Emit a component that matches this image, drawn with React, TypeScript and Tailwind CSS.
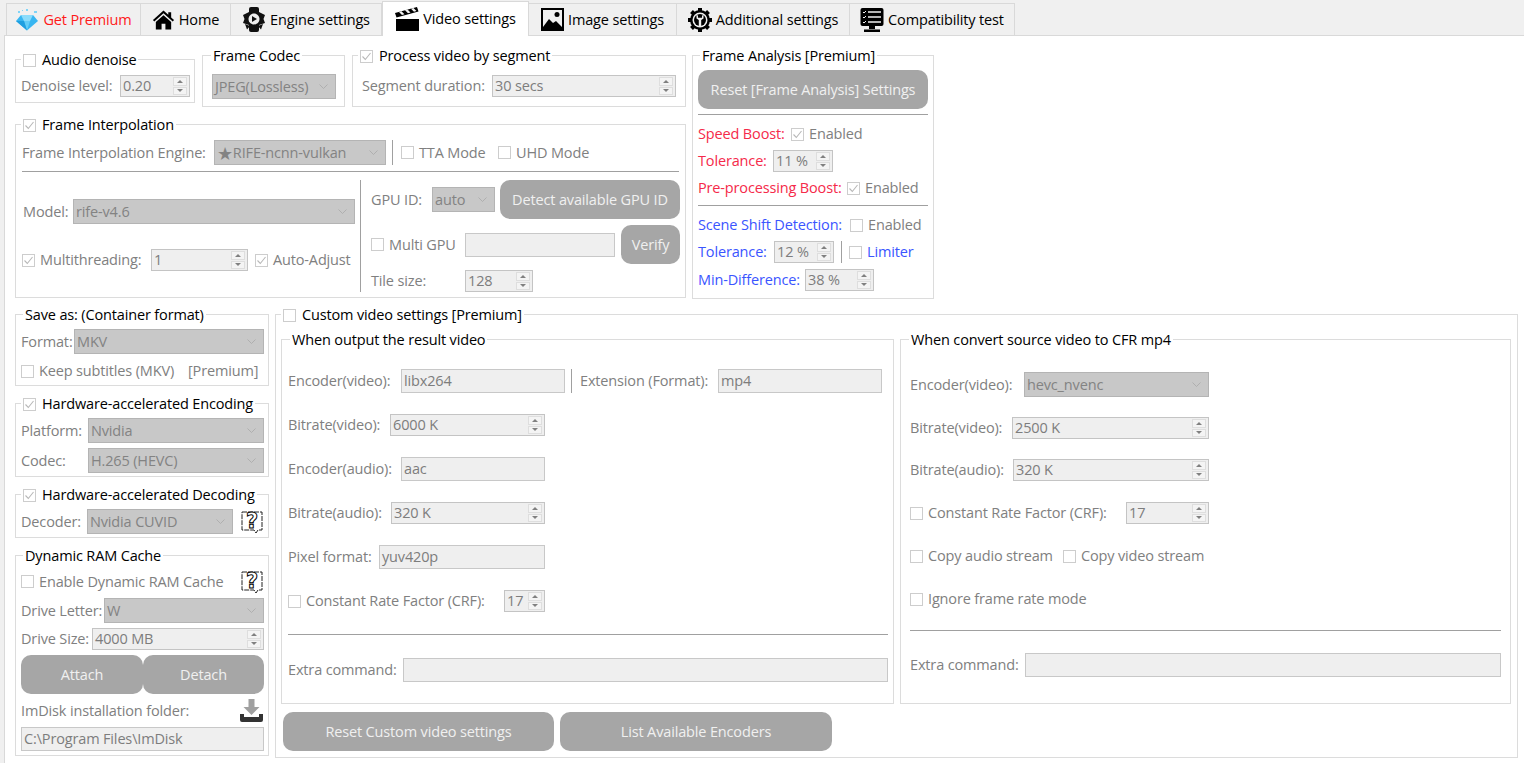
import React from 'react'
import clsx from 'clsx'

// tiny win32-ish widgets

const Chevron = () => (
    <svg width="9" height="5" viewBox="0 0 9 5" className="shrink-0">
        <path d="M0.500 0.500l4 4 4-4" fill="none" stroke="#acacac" strokeWidth="0.9" />
    </svg>
)

const Combo = ({ text, className }: { text: React.ReactNode; className: string }) => (
    <div className={clsx("flex h-[25px] shrink-0 items-center justify-between border border-[#b4b4b4] bg-[#c8c8c8] pl-[2px] pr-[7px] text-[#838383]", className)}>
        <span className="flex items-center whitespace-nowrap">{text}</span>
        <Chevron />
    </div>
)

const Spin = ({ text, className }: { text: string; className: string }) => (
    <div className={clsx("flex h-[22px] shrink-0 items-center justify-between border border-[#c4c4c4] bg-[#efefef] pl-[2px] pr-[2px] text-[#7d7d7d]", className)}>
        <span className="whitespace-nowrap">{text}</span>
        <div className="flex h-[18px] w-[14px] flex-col gap-[1px]">
            <div className="flex flex-1 items-center justify-center border border-[#dedede] bg-[#f4f4f4]">
                <svg width="6" height="3" viewBox="0 0 6 3"><path d="M3 0l3 3H0z" fill="#808080" /></svg>
            </div>
            <div className="flex flex-1 items-center justify-center border border-[#dedede] bg-[#f4f4f4]">
                <svg width="6" height="3" viewBox="0 0 6 3"><path d="M0 0h6L3 3z" fill="#808080" /></svg>
            </div>
        </div>
    </div>
)

const Input = ({ text, className }: { text?: string; className: string }) => (
    <div className={clsx("flex h-[24px] shrink-0 items-center border border-[#c8c8c8] bg-[#efefef] pl-[2px] text-[#7d7d7d]", className)}>
        <span className="whitespace-nowrap">{text}</span>
    </div>
)

const Box = ({ checked }: { checked?: boolean }) => (
    <span className="flex h-[13px] w-[13px] shrink-0 items-center justify-center border border-[#cdcdcd] bg-white">
        {checked && (
            <svg width="11" height="11" viewBox="0 0 11 11">
                <path d="M1.500 5.500l2.800 3L9.500 2" fill="none" stroke="#b8b8b8" strokeWidth="1.100" />
            </svg>
        )}
    </span>
)

const Check = ({ label, checked, className, labelClass }: { label?: string; checked?: boolean; className?: string; labelClass?: string }) => (
    <div className={clsx("flex shrink-0 items-center gap-[5px] whitespace-nowrap", className)}>
        <Box checked={checked} />
        {label && <span className={labelClass ?? "text-[#808080]"}>{label}</span>}
    </div>
)

const Label = ({ text, className }: { text: string; className: string }) => (
    <span className={clsx("shrink-0 whitespace-nowrap text-[#808080]", className)}>{text}</span>
)

const Btn = ({ text, className }: { text: string; className: string }) => (
    <div className={clsx("flex h-[39px] shrink-0 items-center justify-center whitespace-nowrap rounded-[10px] bg-[#a6a6a6] text-[#f0f0f0]", className)}>{text}</div>
)

const Group = ({ title, check, checked, className, inner, children }: { title: string; check?: boolean; checked?: boolean; className: string; inner?: string; children?: React.ReactNode }) => (
    <div className={clsx("shrink-0 border border-[#dcdcdc] bg-white", className)}>
        <div className={clsx("-mt-[10px] flex h-[20px] w-fit items-center gap-[6px] whitespace-nowrap bg-white px-[2px] text-black", inner ?? (check ? "ml-[5px]" : "ml-[7px]"))}>
            {check && <Box checked={checked} />}
            <span>{title}</span>
        </div>
        {children}
    </div>
)

// tab + misc icons

const Diamond = () => (
    <svg width="24" height="23" viewBox="0 0 24 23">
        <g fill="#7fd4f7"><rect x="3" y="3" width="2" height="2" /><rect x="11" y="1" width="2" height="2" /><rect x="19" y="3" width="3" height="2" /><rect x="7" y="2" width="1" height="1" /></g>
        <path d="M6 7h12l5 6-11 9.500L1 13z" fill="#38b6f1" />
        <path d="M6 7h12l-3 6H9z" fill="#8adcfb" />
        <path d="M9 13h6l-3 9.500z" fill="#63cdf7" />
        <path d="M1 13h8l3 9.500z" fill="#1f9fe0" />
    </svg>
)

const HomeIcon = () => (
    <svg width="23" height="22" viewBox="0 0 24 22">
        <path d="M12 1L1 11l1.400 1.500L12 4l9.600 8.500L23 11l-3-2.700V3h-3v2.600z" fill="#000" />
        <path d="M12 6l-8 7v8h6v-6h4v6h6v-8z" fill="#000" />
    </svg>
)

const EngineIcon = () => (
    <svg width="24" height="25" viewBox="0 0 24 25">
        <rect x="7" y="0" width="10" height="25" rx="2" fill="#111" />
        <path d="M1 8l6-3v13l-6-2 1.500-4zM23 8l-6-3v13l6-2-1.500-4z" fill="#111" />
        <path d="M3 17l5 2-3 3.500zM21 17l-5 2 3 3.500z" fill="#111" />
        <path d="M12 6.500c3 0 5.500 2.500 5.500 5.500 0 3-2.500 5.500-5.500 5.500s-5.500-2.500-5.500-5.500c0-3 2.500-5.500 5.500-5.500z" fill="#eee" />
        <path d="M10 9l5 3-5 3z" fill="#111" />
    </svg>
)

const Clapper = () => (
    <svg width="24" height="24" viewBox="0 0 24 24">
        <path d="M1 12h23v12H1z" fill="#000" />
        <path d="M0 6l22-6 1.500 4.500L1.500 10.500z" fill="#000" />
        <path d="M4 5l3 3 2.500-.7-3-3zM10 3.300l3 3 2.500-.7-3-3zM16 1.700l3 3 2.500-.7-3-3z" fill="#f0f0f0" />
    </svg>
)

const ImageIcon = () => (
    <svg width="23" height="23" viewBox="0 0 23 23">
        <rect x="0" y="0" width="23" height="23" fill="#000" />
        <rect x="2" y="2" width="19" height="19" fill="#f0f0f0" />
        <circle cx="16" cy="6.500" r="2.500" fill="#000" />
        <path d="M2 19l6-8 4 4 3-2 6 6v2H2z" fill="#000" />
    </svg>
)

const GearIcon = () => (
    <svg width="24" height="24" viewBox="0 0 24 24">
        <g stroke="#000" strokeWidth="4">
            <path d="M12 0v24M0 12h24M3.500 3.500l17 17M20.500 3.500l-17 17" />
        </g>
        <circle cx="12" cy="12" r="10" fill="#000" />
        <circle cx="12" cy="12" r="7.500" fill="#f0f0f0" />
        <circle cx="12" cy="12" r="6" fill="#000" />
        <path d="M8.500 6.500v4l2.300 1.600V18h2.400v-5.900l2.300-1.600v-4L14 7.800v2h-4v-2z" fill="#f0f0f0" />
    </svg>
)

const MonitorIcon = () => (
    <svg width="24" height="24" viewBox="0 0 24 24">
        <rect x="0.500" y="0" width="23" height="18" rx="2" fill="#000" />
        <path d="M9 18h6v3H9zM4 21.500h16V24H4z" fill="#000" />
        <g stroke="#f0f0f0" fill="none">
            <path d="M3 4l1 1 2-2M3 9l1 1 2-2M3 14l1 1 2-2" strokeWidth="1" />
            <path d="M8 4h13M8 9h13M8 14h13" strokeWidth="1.600" />
        </g>
    </svg>
)

const HelpIcon = ({ className }: { className?: string }) => (
    <svg width="22" height="24" viewBox="0 0 22 24" className={className}>
        <path d="M1 2h20v18h-4l-2 3-2-3H1z" fill="#fff" stroke="#222" strokeWidth="1" strokeDasharray="5 1" />
        <text x="11" y="18" textAnchor="middle" fontSize="21" fontWeight="700" fontFamily="DejaVu Sans, sans-serif" fill="#fff" stroke="#000" strokeWidth="1">?</text>
    </svg>
)

const DownloadIcon = ({ className }: { className?: string }) => (
    <svg width="23" height="23" viewBox="0 0 23 23" className={className}>
        <path d="M8.500 0h6v8h5l-8 8-8-8h5z" fill="#a0a0a0" />
        <path d="M0 15h4v3h15v-3h4v6a2 2 0 0 1-2 2H2a2 2 0 0 1-2-2z" fill="#333" />
    </svg>
)

const tabs = [
    { label: "Get Premium", icon: <Diamond />, w: "w-[135px]", color: "text-[#ff1a1a]" },
    { label: "Home", icon: <HomeIcon />, w: "w-[91px]", color: "text-black" },
    { label: "Engine settings", icon: <EngineIcon />, w: "w-[152px]", color: "text-black" },
    { label: "Video settings", icon: <Clapper />, w: "w-[147px]", color: "text-black", active: true },
    { label: "Image settings", icon: <ImageIcon />, w: "w-[149px]", color: "text-black" },
    { label: "Additional settings", icon: <GearIcon />, w: "w-[174px]", color: "text-black" },
    { label: "Compatibility test", icon: <MonitorIcon />, w: "w-[166px]", color: "text-black" },
]

const App = () => {
    const red = "text-[#f52a4a]"
    const blue = "text-[#3a55ff]"

    return (
        <div className="h-[763px] w-[1524px] overflow-hidden bg-[#f0f0f0] font-['Open_Sans',sans-serif] text-[14.5px] leading-[20px] tracking-[-0.15px]">
            {/* tabs */}
            <div className="flex h-[35px] items-end pl-[6px]">
                {tabs.map((t) => (
                    <div
                        key={t.label}
                        className={clsx(
                            "flex shrink-0 items-center justify-center gap-[4px] whitespace-nowrap border border-[#d9d9d9]",
                            t.w,
                            t.color,
                            t.active ? "-mb-[1px] h-[35px] border-b-0 bg-white" : "h-[32px] border-b-0 bg-[#f0f0f0]",
                            !t.active && t.label !== "Get Premium" && "-ml-[1px]"
                        )}
                    >
                        {t.icon}
                        <span>{t.label}</span>
                    </div>
                ))}
            </div>

            <div className="ml-[4px] h-[728px] border-l border-t border-[#d9d9d9] bg-white pl-[10px] pt-[19px]">
                {/* top part */}
                <div className="flex gap-[6px]">
                    <div className="w-[671px] shrink-0">
                        <div className="flex items-start gap-[7px]">
                            <Group title="Audio denoise" check className="mt-[4px] h-[44px] w-[180px]">
                                <div className="mt-[5px] flex items-center pl-[5px]">
                                    <Label text="Denoise level:" className="w-[99px]" />
                                    <Spin text="0.20" className="w-[70px]" />
                                </div>
                            </Group>
                            <Group title="Frame Codec" className="h-[52px] w-[143px]" inner="ml-[8px]">
                                <div className="mt-[8px] pl-[9px]">
                                    <Combo text="JPEG(Lossless)" className="w-[124px]" />
                                </div>
                            </Group>
                            <Group title="Process video by segment" check checked className="h-[52px] w-[334px]">
                                <div className="mt-[9px] flex items-center pl-[9px]">
                                    <Label text="Segment duration:" className="w-[130px]" />
                                    <Spin text="30 secs" className="w-[184px]" />
                                </div>
                            </Group>
                        </div>

                        <Group title="Frame Interpolation" check checked className="mt-[17px] h-[174px] w-[671px]">
                            <div className="mt-[5px] flex items-center pl-[6px]">
                                <Label text="Frame Interpolation Engine:" className="w-[192px]" />
                                <Combo text={<><span className="text-[18px] leading-none">★</span>RIFE-ncnn-vulkan</>} className="w-[172px]" />
                                <div className="ml-[6px] h-[25px] w-px bg-[#a0a0a0]" />
                                <Check label="TTA Mode" className="ml-[8px] w-[97px]" />
                                <Check label="UHD Mode" />
                            </div>
                            <div className="ml-[6px] mt-[6px] h-px w-[657px] bg-[#a0a0a0]" />
                            <div className="mt-[8px] flex h-[112px]">
                                <div className="w-[344px] shrink-0 pl-[6px]">
                                    <div className="mt-[19px] flex items-center pl-[1px]">
                                        <Label text="Model:" className="w-[50px]" />
                                        <Combo text="rife-v4.6" className="w-[282px]" />
                                    </div>
                                    <div className="mt-[25px] flex items-center">
                                        <Check label="Multithreading:" checked className="w-[129px]" />
                                        <Spin text="1" className="w-[97px]" />
                                        <Check label="Auto-Adjust" checked className="ml-[7px]" />
                                    </div>
                                </div>
                                <div className="h-[112px] w-px shrink-0 bg-[#a0a0a0]" />
                                <div className="pl-[10px]">
                                    <div className="flex h-[39px] items-center">
                                        <Label text="GPU ID:" className="w-[61px]" />
                                        <Combo text="auto" className="w-[63px]" />
                                        <Btn text="Detect available GPU ID" className="ml-[5px] w-[180px]" />
                                    </div>
                                    <div className="mt-[6px] flex h-[39px] items-center">
                                        <Check label="Multi GPU" className="w-[94px]" />
                                        <Input className="w-[150px]" />
                                        <Btn text="Verify" className="ml-[6px] w-[59px]" />
                                    </div>
                                    <div className="mt-[6px] flex items-center">
                                        <Label text="Tile size:" className="w-[94px]" />
                                        <Spin text="128" className="w-[68px]" />
                                    </div>
                                </div>
                            </div>
                        </Group>
                    </div>

                    <Group title="Frame Analysis [Premium]" className="h-[244px] w-[242px]">
                        <div className="pl-[5px]">
                            <Btn text="Reset [Frame Analysis] Settings" className="mt-[4px] w-[230px]" />
                            <div className="mt-[5px] h-px w-[230px] bg-[#a0a0a0]" />
                            <div className="mt-[8px] flex h-[22px] items-center">
                                <span className={clsx(red, "w-[93px]")}>Speed Boost:</span>
                                <Check label="Enabled" checked />
                            </div>
                            <div className="mt-[5px] flex items-center">
                                <span className={clsx(red, "w-[75px]")}>Tolerance:</span>
                                <Spin text="11 %" className="w-[60px]" />
                            </div>
                            <div className="mt-[5px] flex h-[22px] items-center">
                                <span className={clsx(red, "w-[149px] whitespace-nowrap")}>Pre-processing Boost:</span>
                                <Check label="Enabled" checked />
                            </div>
                            <div className="mt-[6px] h-px w-[230px] bg-[#a0a0a0]" />
                            <div className="mt-[8px] flex h-[22px] items-center">
                                <span className={clsx(blue, "w-[152px] whitespace-nowrap")}>Scene Shift Detection:</span>
                                <Check label="Enabled" />
                            </div>
                            <div className="mt-[5px] flex items-center">
                                <span className={clsx(blue, "w-[76px]")}>Tolerance:</span>
                                <Spin text="12 %" className="w-[60px]" />
                                <div className="ml-[7px] h-[22px] w-px bg-[#a0a0a0]" />
                                <Check label="Limiter" labelClass={blue} className="ml-[7px]" />
                            </div>
                            <div className="mt-[6px] flex items-center">
                                <span className={clsx(blue, "w-[107px] whitespace-nowrap")}>Min-Difference:</span>
                                <Spin text="38 %" className="w-[69px]" />
                            </div>
                        </div>
                    </Group>
                </div>

                {/* bottom part */}
                <div className="mt-[15px] flex gap-[6px]">
                    <div className="flex w-[254px] shrink-0 flex-col gap-[17px]">
                        <Group title="Save as: (Container format)" className="h-[72px] w-[254px]">
                            <div className="pl-[5px]">
                                <div className="mt-[4px] flex items-center">
                                    <Label text="Format:" className="w-[53px]" />
                                    <Combo text="MKV" className="w-[190px]" />
                                </div>
                                <div className="mt-[6px] flex h-[22px] items-center">
                                    <Check label="Keep subtitles (MKV)" className="w-[167px]" />
                                    <span className="text-[#808080]">[Premium]</span>
                                </div>
                            </div>
                        </Group>
                        <Group title="Hardware-accelerated Encoding" check checked className="h-[74px] w-[254px]">
                            <div className="pl-[5px]">
                                <div className="mt-[4px] flex items-center">
                                    <Label text="Platform:" className="w-[67px]" />
                                    <Combo text="Nvidia" className="w-[176px]" />
                                </div>
                                <div className="mt-[5px] flex items-center">
                                    <Label text="Codec:" className="w-[67px]" />
                                    <Combo text="H.265 (HEVC)" className="w-[176px]" />
                                </div>
                            </div>
                        </Group>
                        <Group title="Hardware-accelerated Decoding" check checked className="h-[44px] w-[254px]">
                            <div className="mt-[4px] flex items-center pl-[5px]">
                                <Label text="Decoder:" className="w-[66px]" />
                                <Combo text="Nvidia CUVID" className="w-[146px]" />
                                <HelpIcon className="ml-[8px] shrink-0" />
                            </div>
                        </Group>
                        <Group title="Dynamic RAM Cache" className="h-[201px] w-[254px]">
                            <div className="pl-[5px]">
                                <div className="mt-[4px] flex h-[23px] items-center">
                                    <Check label="Enable Dynamic RAM Cache" className="w-[220px]" />
                                    <HelpIcon className="shrink-0" />
                                </div>
                                <div className="mt-[5px] flex items-center">
                                    <Label text="Drive Letter:" className="w-[83px]" />
                                    <Combo text="W" className="w-[160px]" />
                                </div>
                                <div className="mt-[5px] flex items-center">
                                    <Label text="Drive Size:" className="w-[71px]" />
                                    <Spin text="4000 MB" className="w-[172px]" />
                                </div>
                                <div className="mt-[5px] flex">
                                    <Btn text="Attach" className="w-[122px]" />
                                    <Btn text="Detach" className="w-[121px]" />
                                </div>
                                <div className="mt-[5px] flex h-[23px] items-center justify-between pr-[5px]">
                                    <Label text="ImDisk installation folder:" className="" />
                                    <DownloadIcon className="shrink-0" />
                                </div>
                                <Input text="C:\Program Files\ImDisk" className="mt-[5px] h-[23px] w-[243px]" />
                            </div>
                        </Group>
                    </div>

                    <Group title="Custom video settings [Premium]" check className="h-[444px] w-[1243px]">
                        <div className="mt-[14px] flex gap-[6px] pl-[5px]">
                            <Group title="When output the result video" className="h-[365px] w-[613px]" inner="ml-[8px]">
                                <div className="pl-[6px]">
                                    <div className="mt-[19px] flex items-center">
                                        <Label text="Encoder(video):" className="w-[113px]" />
                                        <Input text="libx264" className="w-[164px]" />
                                        <div className="ml-[6px] h-[24px] w-px bg-[#a0a0a0]" />
                                        <Label text="Extension (Format):" className="ml-[8px] w-[138px]" />
                                        <Input text="mp4" className="w-[164px]" />
                                    </div>
                                    <div className="mt-[21px] flex items-center">
                                        <Label text="Bitrate(video):" className="w-[102px]" />
                                        <Spin text="6000 K" className="w-[155px]" />
                                    </div>
                                    <div className="mt-[21px] flex items-center">
                                        <Label text="Encoder(audio):" className="w-[113px]" />
                                        <Input text="aac" className="w-[144px]" />
                                    </div>
                                    <div className="mt-[21px] flex items-center">
                                        <Label text="Bitrate(audio):" className="w-[103px]" />
                                        <Spin text="320 K" className="w-[154px]" />
                                    </div>
                                    <div className="mt-[21px] flex items-center">
                                        <Label text="Pixel format:" className="w-[91px]" />
                                        <Input text="yuv420p" className="w-[166px]" />
                                    </div>
                                    <div className="mt-[21px] flex items-center">
                                        <Check label="Constant Rate Factor (CRF):" className="w-[216px]" />
                                        <Spin text="17" className="w-[41px]" />
                                    </div>
                                    <div className="mt-[22px] h-px w-[600px] bg-[#a0a0a0]" />
                                    <div className="mt-[23px] flex items-center">
                                        <Label text="Extra command:" className="w-[115px]" />
                                        <Input className="w-[485px]" />
                                    </div>
                                </div>
                            </Group>
                            <Group title="When convert source video to CFR mp4" className="h-[365px] w-[611px]" inner="ml-[8px]">
                                <div className="pl-[9px]">
                                    <div className="mt-[22px] flex items-center">
                                        <Label text="Encoder(video):" className="w-[114px]" />
                                        <Combo text="hevc_nvenc" className="w-[185px]" />
                                    </div>
                                    <div className="mt-[20px] flex items-center">
                                        <Label text="Bitrate(video):" className="w-[102px]" />
                                        <Spin text="2500 K" className="w-[197px]" />
                                    </div>
                                    <div className="mt-[20px] flex items-center">
                                        <Label text="Bitrate(audio):" className="w-[103px]" />
                                        <Spin text="320 K" className="w-[196px]" />
                                    </div>
                                    <div className="mt-[21px] flex items-center">
                                        <Check label="Constant Rate Factor (CRF):" className="w-[216px]" />
                                        <Spin text="17" className="w-[83px]" />
                                    </div>
                                    <div className="mt-[21px] flex h-[22px] items-center">
                                        <Check label="Copy audio stream" className="w-[153px]" />
                                        <Check label="Copy video stream" />
                                    </div>
                                    <div className="mt-[21px] flex h-[22px] items-center">
                                        <Check label="Ignore frame rate mode" />
                                    </div>
                                    <div className="mt-[20px] h-px w-[591px] bg-[#a0a0a0]" />
                                    <div className="mt-[22px] flex items-center">
                                        <Label text="Extra command:" className="w-[115px]" />
                                        <Input className="w-[476px]" />
                                    </div>
                                </div>
                            </Group>
                        </div>
                        <div className="ml-[7px] mt-[8px] flex gap-[6px]">
                            <Btn text="Reset Custom video settings" className="w-[271px]" />
                            <Btn text="List Available Encoders" className="w-[272px]" />
                        </div>
                    </Group>
                </div>
            </div>
        </div>
    )
}

export default App
